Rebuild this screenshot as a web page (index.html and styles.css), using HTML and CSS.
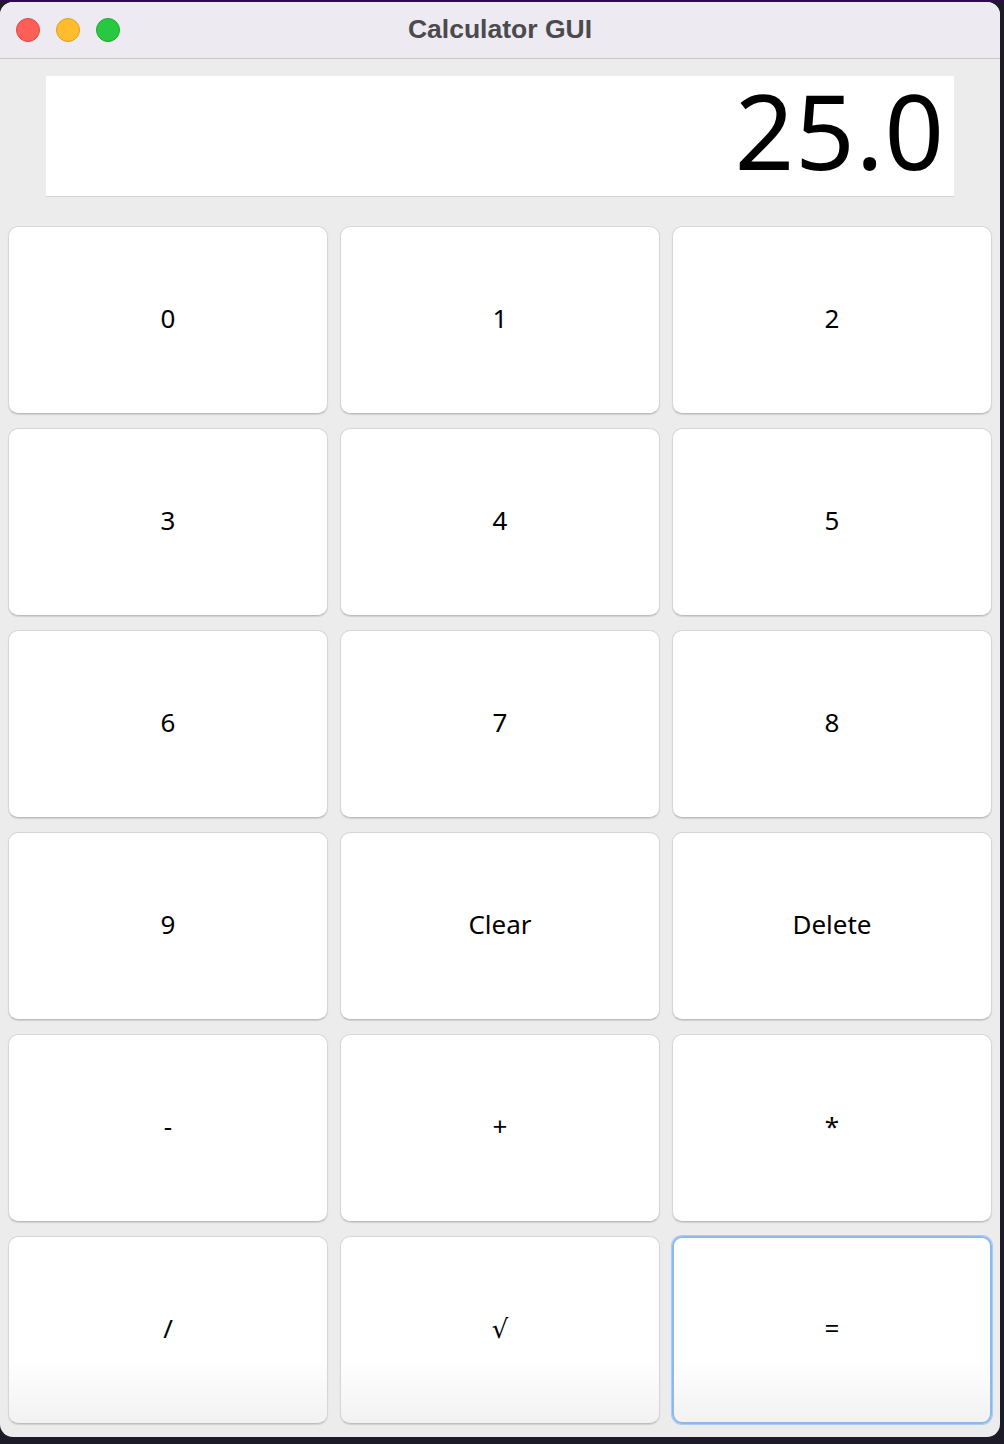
FILE: index.html
```html
<!DOCTYPE html>
<html lang="en">
<head>
<meta charset="utf-8">
<title>Calculator GUI</title>
<link rel="stylesheet" href="styles.css">
</head>
<body>
<div class="window">
  <div class="titlebar">
    <div class="lights">
      <span class="light red"></span>
      <span class="light yellow"></span>
      <span class="light green"></span>
    </div>
    <div class="title">Calculator GUI</div>
  </div>
  <div class="content">
    <div class="display">25.0</div>
    <div class="keys">
      <button class="key">0</button>
      <button class="key">1</button>
      <button class="key">2</button>
      <button class="key">3</button>
      <button class="key">4</button>
      <button class="key">5</button>
      <button class="key">6</button>
      <button class="key">7</button>
      <button class="key">8</button>
      <button class="key">9</button>
      <button class="key">Clear</button>
      <button class="key">Delete</button>
      <button class="key">-</button>
      <button class="key">+</button>
      <button class="key">*</button>
      <button class="key last">/</button>
      <button class="key last">√</button>
      <button class="key last focused">=</button>
    </div>
  </div>
</div>
</body>
</html>
```
FILE: styles.css
```css
html, body {
  margin: 0;
  padding: 0;
}
body {
  width: 1004px;
  height: 1444px;
  background: #1d1b27;
  border-top: 2px solid #2c0c4c;
  box-sizing: border-box;
  overflow: hidden;
  font-family: "Noto Sans", "DejaVu Sans", sans-serif;
}
.window {
  width: 1000px;
  height: 1435px;
  border-radius: 13px;
  overflow: hidden;
  background: #ececec;
  display: flex;
  flex-direction: column;
}
.titlebar {
  position: relative;
  height: 56px;
  flex: none;
  background: #edebf1;
  border-bottom: 1px solid #c8c7cb;
  display: flex;
  align-items: center;
  justify-content: center;
}
.lights {
  position: absolute;
  left: 16px;
  top: 16px;
  display: flex;
  gap: 16px;
}
.light {
  width: 24px;
  height: 24px;
  border-radius: 50%;
  box-sizing: border-box;
}
.red { background: #ff5f57; border: 1px solid #e2463f; }
.yellow { background: #febc2e; border: 1px solid #e1a116; }
.green { background: #28c840; border: 1px solid #1aab29; }
.title {
  font-family: "Liberation Sans", Arial, sans-serif;
  font-weight: bold;
  font-size: 26.5px;
  color: #4b4a4e;
  margin-top: -2px;
}
.content {
  flex: 1;
  display: flex;
  flex-direction: column;
  padding-top: 17px;
}
.display {
  margin: 0 46px;
  height: 120px;
  background: #ffffff;
  box-shadow: 0 1px 0 #d2d2d2;
  font-size: 104px;
  line-height: 108px;
  letter-spacing: 1px;
  text-align: right;
  padding-right: 9px;
  color: #000;
}
.keys {
  margin-top: 30px;
  padding-left: 8px;
  display: grid;
  grid-template-columns: repeat(3, 320px);
  grid-auto-rows: 188px;
  column-gap: 12px;
  row-gap: 14px;
}
.key {
  font-family: "Noto Sans", "DejaVu Sans", sans-serif;
  font-size: 26px;
  color: #000;
  background: #ffffff;
  border: 1px solid #d6d6d6;
  border-bottom-color: #bdbdbd;
  border-radius: 10px;
  box-shadow: 0 1px 1px rgba(0, 0, 0, 0.12);
  padding: 0 0 4px 0;
  margin: 0;
  display: flex;
  align-items: center;
  justify-content: center;
}
.key.last {
  background: linear-gradient(to bottom, #ffffff 0%, #ffffff 65%, #f2f2f2 100%);
}
.key.focused {
  border: 2px solid #8ab9ee;
  box-shadow: 0 0 0 1px #a9ccf3;
}
```
